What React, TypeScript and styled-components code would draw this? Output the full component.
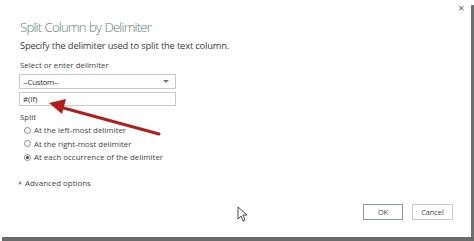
import React from 'react';
import styled, { createGlobalStyle } from 'styled-components';

const GlobalStyle = createGlobalStyle`
  html, body {
    margin: 0;
    padding: 0;
    background: #fff;
  }
  body {
    font-family: 'Open Sans', 'Noto Sans', sans-serif;
    color: #333;
  }
`;

const Frame = styled.div`
  position: relative;
  width: 474px;
  height: 241px;
  overflow: hidden;
  display: flex;
  flex-direction: column;
  background: #fff;
`;

const Body = styled.div`
  flex: 1;
  display: flex;
  min-height: 0;
`;

const Dialog = styled.div`
  flex: 1;
  display: flex;
  flex-direction: column;
  padding: 17px 18px 0 19px;
  position: relative;
`;

const RightEdge = styled.div`
  width: 3px;
  margin-top: 5px;
  background: #6f6f6f;
`;

const BottomEdge = styled.div`
  height: 4px;
  margin-left: 2px;
  background: #6a6a6a;
`;

const Title = styled.h1`
  margin: 0 0 0 1px;
  font-size: 13.2px;
  line-height: 20px;
  font-weight: 300;
  color: #638075;
  letter-spacing: -0.8px;
  word-spacing: 0.5px;
`;

const Subtitle = styled.p`
  margin: 3px 0 0 1px;
  font-size: 9.3px;
  line-height: 12px;
  color: #3a3a3a;
  letter-spacing: -0.15px;
`;

const FieldLabel = styled.div<{ top: number }>`
  margin: ${({ top }) => top}px 0 0 1px;
  font-size: 7.9px;
  line-height: 12px;
  color: #444;
`;

const Box = styled.div`
  width: 157px;
  box-sizing: border-box;
  border: 1px solid #c8c8c8;
  display: flex;
  align-items: center;
  padding: 0 3px;
  font-size: 7.9px;
  color: #333;
`;

const Select = styled(Box)`
  margin-top: 3px;
  height: 15px;
  justify-content: space-between;
  letter-spacing: -0.3px;
`;

const Input = styled(Box)`
  margin-top: 3px;
  height: 14px;
`;

const Caret = styled.span`
  width: 0;
  height: 0;
  border-left: 3px solid transparent;
  border-right: 3px solid transparent;
  border-top: 3px solid #777;
  margin-right: 3px;
`;

const RadioList = styled.div`
  display: flex;
  flex-direction: column;
  gap: 1.5px;
  margin: 1px 0 0 5px;
`;

const RadioRow = styled.label`
  display: flex;
  align-items: center;
  gap: 3px;
  height: 12px;
  font-size: 7.9px;
  color: #444;
`;

const RadioDot = styled.span<{ checked?: boolean }>`
  width: 5px;
  height: 5px;
  border-radius: 50%;
  border: 1px solid #8a8a8a;
  display: flex;
  align-items: center;
  justify-content: center;
  &::after {
    content: '';
    width: 3px;
    height: 3px;
    border-radius: 50%;
    background: ${({ checked }) => (checked ? '#444' : 'transparent')};
  }
`;

const Advanced = styled.div`
  margin: 14px 0 0 0;
  height: 12px;
  display: flex;
  align-items: center;
  gap: 3px;
  font-size: 7.9px;
  color: #444;
`;

const Triangle = styled.span`
  width: 0;
  height: 0;
  border-top: 2.5px solid transparent;
  border-bottom: 2.5px solid transparent;
  border-left: 3px solid #888;
`;

const Footer = styled.div`
  margin-top: auto;
  display: flex;
  justify-content: flex-end;
  gap: 9px;
  padding: 0 0 17px 0;
`;

const Button = styled.button<{ primary?: boolean }>`
  width: ${({ primary }) => (primary ? 40 : 41)}px;
  height: 16px;
  padding: 0;
  background: #fff;
  border: 1px solid ${({ primary }) => (primary ? '#7aa596' : '#c8c8c8')};
  font-family: inherit;
  font-size: 7.3px;
  color: #444;
  display: flex;
  align-items: center;
  justify-content: center;
`;

const Close = styled.span`
  position: absolute;
  top: 2px;
  right: 6px;
  font-size: 8px;
  color: #666;
`;

// annotation layer: red arrow and mouse pointer drawn over the dialog
const Overlay = styled.svg`
  position: absolute;
  left: 0;
  top: 0;
  pointer-events: none;
`;

export default function App() {
  return (
    <Frame>
      <GlobalStyle />
      <Body>
        <Dialog>
          <Close>✕</Close>
          <Title>Split Column by Delimiter</Title>
          <Subtitle>Specify the delimiter used to split the text column.</Subtitle>
          <FieldLabel top={7}>Select or enter delimiter</FieldLabel>
          <Select>
            <span>--Custom--</span>
            <Caret />
          </Select>
          <Input>#(lf)</Input>
          <FieldLabel top={5}>Split</FieldLabel>
          <RadioList>
            <RadioRow><RadioDot />At the left-most delimiter</RadioRow>
            <RadioRow><RadioDot />At the right-most delimiter</RadioRow>
            <RadioRow><RadioDot checked />At each occurrence of the delimiter</RadioRow>
          </RadioList>
          <Advanced><Triangle />Advanced options</Advanced>
          <Footer>
            <Button primary>OK</Button>
            <Button>Cancel</Button>
          </Footer>
        </Dialog>
        <RightEdge />
      </Body>
      <BottomEdge />
      <Overlay width="474" height="241" viewBox="0 0 474 241">
        <line x1="159" y1="134" x2="60" y2="107" stroke="#b01e1e" strokeWidth="3" strokeLinecap="round" />
        <polygon points="49,103 66,99 62,114" fill="#b01e1e" />
        <path
          d="M238 207 L238 219 L241 216 L243 221 L245 220 L243 215 L247 215 Z"
          fill="#fff"
          stroke="#333"
          strokeWidth="0.9"
          strokeLinejoin="round"
        />
      </Overlay>
    </Frame>
  );
}
